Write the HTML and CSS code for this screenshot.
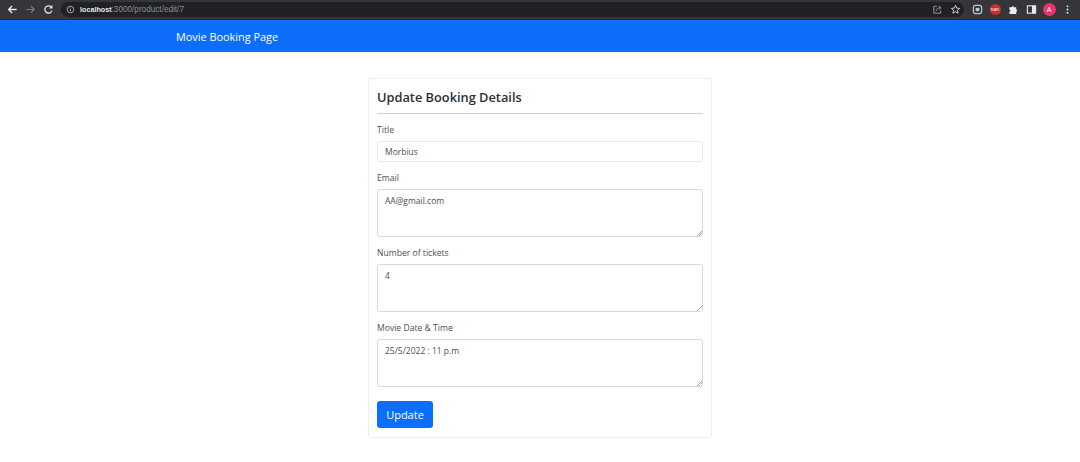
FILE: index.html
```html
<!DOCTYPE html>
<html lang="en">
<head>
  <meta charset="UTF-8" />
  <title>Movie Booking Page</title>
  <link rel="stylesheet" href="styles.css">
</head>
<body>

  <!-- Browser toolbar -->
  <div class="browser-bar">
    <svg class="tool" viewBox="0 0 12 12"><path d="M10.500 6H2M5.500 2.200 1.800 6l3.700 3.800" fill="none" stroke="#e8eaed" stroke-width="1.400"/></svg>
    <svg class="tool" viewBox="0 0 12 12"><path d="M1.500 6H10M6.500 2.200 10.200 6 6.500 9.800" fill="none" stroke="#7d8085" stroke-width="1.200"/></svg>
    <svg class="tool" viewBox="0 0 12 12"><path d="M9.800 7.200A4 4 0 1 1 9 3.300" fill="none" stroke="#e8eaed" stroke-width="1.400"/><path d="M10.300 1.200v3.600H6.700z" fill="#e8eaed"/></svg>
    <div class="address">
      <svg class="info" viewBox="0 0 12 12"><circle cx="6" cy="6" r="4.400" fill="none" stroke="#c4c7c9" stroke-width="1"/><path d="M6 5.300v3.200M6 3.300v1" stroke="#c4c7c9" stroke-width="1"/></svg>
      <span class="host">localhost</span><span class="path">:3000/product/edit/7</span>
      <div class="address-end">
        <svg class="tool" viewBox="0 0 12 12"><path d="M5.500 2.500H2v7.500h7.500V7M4.500 7.500C5 5 6.500 4 9 4M7.700 1.800 10 4 7.700 6.200" fill="none" stroke="#9aa0a6" stroke-width="1"/></svg>
        <svg class="tool" viewBox="0 0 12 12"><path d="m6 1.500 1.350 3 3.150.3-2.400 2.100.75 3.100L6 8.400 3.150 10l.75-3.100-2.400-2.100 3.150-.3z" fill="none" stroke="#dadce0" stroke-width="1"/></svg>
      </div>
    </div>
    <div class="extensions">
      <svg class="ext-icon" viewBox="0 0 12 12"><rect x="1.500" y="1.500" width="9" height="9" rx="2.500" fill="none" stroke="#c4c7c9" stroke-width="1.300"/><rect x="4" y="4.200" width="4" height="3.600" fill="#c4c7c9"/></svg>
      <span class="ext-red">RAR</span>
      <svg class="ext-icon" viewBox="0 0 12 12"><path d="M1.500 3.500h2.500a1.300 1.300 0 0 1 2.500 0H9v2.500a1.300 1.300 0 0 1 0 2.500v2.500H1.500V8.500a1.300 1.300 0 0 0 0-2.500z" fill="#e8eaed"/></svg>
      <svg class="ext-icon" viewBox="0 0 12 12"><rect x="1.500" y="2" width="9" height="8" fill="none" stroke="#e8eaed" stroke-width="1.200"/><rect x="6.500" y="2" width="4" height="8" fill="#e8eaed"/></svg>
      <span class="avatar">A</span>
      <svg class="ext-icon" viewBox="0 0 12 12"><circle cx="6" cy="2.500" r="1" fill="#e8eaed"/><circle cx="6" cy="6" r="1" fill="#e8eaed"/><circle cx="6" cy="9.500" r="1" fill="#e8eaed"/></svg>
    </div>
  </div>

  <!-- Navbar -->
  <nav class="navbar">
    <a class="brand">Movie Booking Page</a>
  </nav>

  <!-- Form card -->
  <div class="card">
    <h3 class="card-title">Update Booking Details</h3>
    <form class="booking-form">
      <div class="field">
        <label for="title">Title</label>
        <input id="title" class="control" type="text" value="Morbius" />
      </div>
      <div class="field">
        <label for="email">Email</label>
        <textarea id="email" class="control">AA@gmail.com</textarea>
      </div>
      <div class="field">
        <label for="tickets">Number of tickets</label>
        <textarea id="tickets" class="control">4</textarea>
      </div>
      <div class="field">
        <label for="date">Movie Date &amp; Time</label>
        <textarea id="date" class="control">25/5/2022 : 11 p.m</textarea>
      </div>
      <button class="btn" type="button">Update</button>
    </form>
  </div>

</body>
</html>
```

FILE: styles.css
```css
html, body {
  margin: 0;
  padding: 0;
  background-color: #ffffff;
  color: #212529;
  font-family: "Open Sans", "Noto Sans", sans-serif;
  overflow: hidden;
}

/* Browser toolbar */
.browser-bar {
  display: flex;
  align-items: center;
  height: 19px;
  padding-left: 7px;
  gap: 5px;
  background-color: #35363a;
  border-bottom: 1px solid #2a2b2e;
}
.tool {
  width: 11px;
  height: 11px;
  margin-right: 2px;
  flex: none;
}
.address {
  display: flex;
  align-items: center;
  width: 903px;
  height: 15px;
  padding-left: 5px;
  box-sizing: border-box;
  background-color: #202124;
  border-radius: 8px;
  font-family: "Liberation Sans", sans-serif;
}
.info {
  width: 9px;
  height: 9px;
  margin-right: 5px;
}
.host {
  color: #e8eaed;
  font-size: 7.200px;
  font-weight: bold;
}
.path {
  color: #8b8e92;
  font-size: 8.200px;
}
.address-end {
  display: flex;
  gap: 5px;
  margin-left: auto;
  padding-right: 1.500px;
}
.extensions {
  display: grid;
  grid-template-columns: repeat(6, 18px);
  align-items: center;
  justify-items: center;
  margin-left: -1px;
}
.ext-icon {
  width: 11px;
  height: 11px;
}
.ext-red {
  width: 11px;
  height: 11px;
  border-radius: 50%;
  background-color: #c9302c;
  color: #ffffff;
  font-family: "Liberation Sans", sans-serif;
  font-size: 4px;
  line-height: 11px;
  text-align: center;
}
.avatar {
  width: 13px;
  height: 13px;
  border-radius: 50%;
  background-color: #e8336e;
  color: #ffffff;
  font-family: "Liberation Sans", sans-serif;
  font-size: 7px;
  line-height: 13px;
  text-align: center;
}

/* Navbar */
.navbar {
  display: flex;
  align-items: center;
  height: 32px;
  padding-left: 176px;
  background-color: #0d6efd;
}
.brand {
  color: #ffffff;
  font-size: 10.900px;
}

/* Card */
.card {
  width: 344px;
  height: 360px;
  box-sizing: border-box;
  margin: 26px auto 0;
  padding: 8px;
  background-color: #ffffff;
  border: 1px solid #eceded;
  border-radius: 3px;
}
.card-title {
  margin: 0;
  height: 27px;
  padding-top: 1px;
  box-sizing: border-box;
  border-bottom: 1px solid #cfd1d4;
  color: #2b3035;
  font-size: 12.800px;
  font-weight: 600;
  line-height: 18px;
}
.booking-form {
  display: flex;
  flex-direction: column;
  align-items: flex-start;
  margin-top: 10px;
  gap: 10px;
}
.field {
  display: flex;
  flex-direction: column;
  width: 100%;
  gap: 5px;
}
.field label {
  color: #4a4f55;
  font-size: 8.600px;
  line-height: 12px;
}
.control {
  display: block;
  width: 100%;
  box-sizing: border-box;
  padding: 4px 7px;
  background-color: #ffffff;
  border: 1px solid #d6d9dc;
  border-radius: 3px;
  color: #4a4f55;
  font-family: inherit;
  font-size: 8.500px;
  line-height: 13px;
}
input.control {
  height: 21px;
  border-color: #e6e8ea;
}
textarea.control {
  height: 48px;
  margin: 0;
}
textarea.control::-webkit-resizer {
  background: linear-gradient(135deg, transparent 55%, #a5a7aa 55%, #a5a7aa 63%, transparent 63%, transparent 75%, #a5a7aa 75%, #a5a7aa 83%, transparent 83%) right bottom / 6px 6px no-repeat;
}
.btn {
  width: 56px;
  height: 27px;
  margin-top: 4px;
  padding: 0;
  background-color: #0d6efd;
  border: none;
  border-radius: 3px;
  color: #ffffff;
  font-family: inherit;
  font-size: 11px;
}
```
